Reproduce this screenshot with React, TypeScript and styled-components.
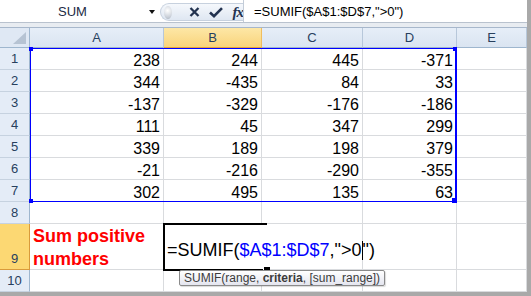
import React from "react";
import styled, { createGlobalStyle } from "styled-components";

const GlobalStyle = createGlobalStyle`
  html, body {
    margin: 0;
    padding: 0;
    background: #fff;
  }
  body {
    font-family: "Liberation Sans", Arial, sans-serif;
  }
`;

const Window = styled.div`
  width: 531px;
  height: 296px;
  box-sizing: border-box;
  overflow: hidden;
  background: #fff;
  border-right: 4px solid #a9a9a9;
  border-bottom: 4px solid #a9a9a9;
  display: flex;
  flex-direction: column;
`;

const FormulaBar = styled.div`
  height: 23px;
  box-sizing: border-box;
  border-bottom: 1px solid #b9c2ce;
  display: flex;
  align-items: stretch;
  background: #fff;
`;

const NameBox = styled.div`
  width: 160px;
  display: flex;
  align-items: center;
`;

const NameText = styled.div`
  flex: 1;
  text-align: center;
  font-size: 13px;
  color: #1b2a44;
`;

const DropArrow = styled.div`
  width: 0;
  height: 0;
  margin: 1px 5px 0 4px;
  border-left: 3.5px solid transparent;
  border-right: 3.5px solid transparent;
  border-top: 4px solid #111;
`;

const ButtonPill = styled.div`
  width: 83px;
  margin: 3px 0 1px;
  box-sizing: border-box;
  border: 1px solid #c7d1de;
  border-right: none;
  border-radius: 10px 0 0 10px;
  background: linear-gradient(#f5f8fc, #dfe7f2);
  display: flex;
  align-items: center;
  padding-left: 3px;
  gap: 9px;
`;

const Bubble = styled.div`
  width: 11px;
  height: 13px;
  border-radius: 50%;
  background: radial-gradient(circle at 45% 35%, #ffffff, #c9cfd8 70%, #a9b2be);
  margin-right: 8px;
`;

const BarIcon = styled.svg`
  display: block;
  flex: none;
`;

const Fx = styled.span`
  font-family: "Liberation Serif", "Times New Roman", serif;
  font-style: italic;
  font-weight: bold;
  font-size: 15px;
  color: #22324f;
  letter-spacing: -1px;
  margin-left: 1px;
`;

const FormulaInput = styled.div`
  flex: 1;
  border-left: 1px solid #c3ccd8;
  display: flex;
  align-items: center;
  padding-left: 10px;
  font-size: 13px;
  color: #000;
  white-space: nowrap;
`;

const Band = styled.div`
  height: 5px;
  box-sizing: border-box;
  background: #e8ecf1;
  border-bottom: 1px solid #a7b7cb;
`;

const Sheet = styled.div`
  display: grid;
  grid-template-columns: 30px 134px 98px 101px 94px 70px;
  grid-template-rows: 20px repeat(8, 22px) 46px 22px;
`;

type Placed = { $row: number; $col: number };

const Corner = styled.div<Placed>`
  grid-row: ${(p) => p.$row};
  grid-column: ${(p) => p.$col};
  position: relative;
  box-sizing: border-box;
  background: #dfe8f4;
  border-right: 1px solid #9eb6ce;
  border-bottom: 1px solid #9eb6ce;
  &::after {
    content: "";
    position: absolute;
    right: 3px;
    bottom: 3px;
    width: 13px;
    height: 12px;
    background: #b6c3d3;
    clip-path: polygon(100% 0, 100% 100%, 0 100%);
  }
`;

const ColHead = styled.div<Placed & { $active?: boolean }>`
  grid-row: ${(p) => p.$row};
  grid-column: ${(p) => p.$col};
  box-sizing: border-box;
  display: flex;
  align-items: center;
  justify-content: center;
  font-size: 13px;
  color: #27405e;
  background: ${(p) =>
    p.$active ? "linear-gradient(#fde7a6, #f9d47c)" : "linear-gradient(#e6eef8, #dae4f1)"};
  border-right: 1px solid ${(p) => (p.$active ? "#f0bd5e" : "#b7c7da")};
  border-bottom: 1px solid ${(p) => (p.$active ? "#e2a53c" : "#9eb6ce")};
`;

const RowHead = styled.div<Placed & { $active?: boolean }>`
  grid-row: ${(p) => p.$row};
  grid-column: ${(p) => p.$col};
  box-sizing: border-box;
  display: flex;
  align-items: ${(p) => (p.$active ? "flex-end" : "center")};
  justify-content: center;
  padding-bottom: ${(p) => (p.$active ? "3px" : "0")};
  font-size: 13px;
  color: #27405e;
  background: ${(p) => (p.$active ? "#fcd873" : "#e4ecf7")};
  border-right: 1px solid ${(p) => (p.$active ? "#d99a3b" : "#9eb6ce")};
  border-bottom: 1px solid ${(p) => (p.$active ? "#d99a3b" : "#c6d2e0")};
`;

const Cell = styled.div<Placed & { $align?: "left" | "right" }>`
  grid-row: ${(p) => p.$row};
  grid-column: ${(p) => p.$col};
  box-sizing: border-box;
  border-right: 1px solid #d9dbde;
  border-bottom: 1px solid #d9dbde;
  display: flex;
  align-items: flex-end;
  justify-content: ${(p) => (p.$align === "right" ? "flex-end" : "flex-start")};
  padding: 0 3px;
  font-size: 16px;
  line-height: 17px;
  color: #000;
  white-space: nowrap;
`;

const Label = styled.div`
  font-weight: bold;
  font-size: 18px;
  line-height: 23px;
  color: #ff0000;
  margin-bottom: -2px;
  white-space: normal;
`;

const RefRange = styled.div`
  grid-row: 2 / 9;
  grid-column: 2 / 6;
  position: relative;
  box-sizing: border-box;
  border: 1px solid #0000ff;
  border-right-width: 2px;
  pointer-events: none;
  z-index: 2;
`;

const Handle = styled.div<{ $x: "left" | "right"; $y: "top" | "bottom"; $size: number }>`
  position: absolute;
  width: ${(p) => p.$size}px;
  height: ${(p) => p.$size}px;
  background: #0000ff;
  ${(p) => p.$x}: -2px;
  ${(p) => p.$y}: -2px;
`;

const EditCell = styled.div`
  grid-row: 10;
  grid-column: 3;
  margin: -1px -5px -1px -1px;
  position: relative;
  z-index: 3;
  box-sizing: border-box;
  border: 2px solid #000;
  border-right: none;
  display: flex;
  align-items: center;
  padding: 6px 0 0 2px;
  font-size: 18px;
  white-space: nowrap;
  color: #000;
`;

const RefText = styled.span`
  color: #0000ff;
`;

const Caret = styled.span`
  display: inline-block;
  width: 1px;
  height: 19px;
  background: #000;
  vertical-align: -4px;
`;

const FillHandle = styled.div`
  position: absolute;
  right: -3px;
  bottom: -4px;
  width: 6px;
  height: 5px;
  background: #000;
  border: 1px solid #fff;
  border-right: none;
`;

const Tooltip = styled.div`
  position: absolute;
  left: 14px;
  top: calc(100% + 1px);
  height: 16px;
  box-sizing: border-box;
  padding: 0 4px;
  border: 1px solid #8a8a8a;
  border-radius: 2px;
  background: linear-gradient(#ffffff, #e4e5ef);
  box-shadow: 1px 1px 1px rgba(0, 0, 0, 0.15);
  font-size: 12px;
  line-height: 14px;
  color: #3c3c3c;
`;

const data = [
  [238, 244, 445, -371],
  [344, -435, 84, 33],
  [-137, -329, -176, -186],
  [111, 45, 347, 299],
  [339, 189, 198, 379],
  [-21, -216, -290, -355],
  [302, 495, 135, 63],
];

const columns = ["A", "B", "C", "D", "E"];

const EditCellBlock = () => (
  <EditCell>
    <span>
      =SUMIF(<RefText>$A$1:$D$7</RefText>,"&gt;0
      <Caret />
      ")
    </span>
    <FillHandle />
    <Tooltip>
      SUMIF(range, <b>criteria</b>, [sum_range])
    </Tooltip>
  </EditCell>
);

const App = () => {
  const rows = Array.from({ length: 10 }, (_, i) => i + 1);

  return (
    <Window>
      <GlobalStyle />
      <FormulaBar>
        <NameBox>
          <NameText>SUM</NameText>
          <DropArrow />
        </NameBox>
        <ButtonPill>
          <Bubble />
          <BarIcon width="11" height="10" viewBox="0 0 11 10">
            <path d="M1.5 1 L9.5 9 M9.5 1 L1.5 9" stroke="#22324f" strokeWidth="2.3" fill="none" />
          </BarIcon>
          <BarIcon width="14" height="11" viewBox="0 0 14 11">
            <path d="M1 5.5 L5 9.2 L13 1.2" stroke="#22324f" strokeWidth="2.6" fill="none" />
          </BarIcon>
          <Fx>fx</Fx>
        </ButtonPill>
        <FormulaInput>=SUMIF($A$1:$D$7,"&gt;0")</FormulaInput>
      </FormulaBar>
      <Band />
      <Sheet>
        <Corner $row={1} $col={1} />
        {columns.map((c, i) => (
          <ColHead key={c} $row={1} $col={i + 2} $active={c === "B"}>
            {c}
          </ColHead>
        ))}
        {rows.map((r) => (
          <React.Fragment key={r}>
            <RowHead $row={r + 1} $col={1} $active={r === 9}>
              {r}
            </RowHead>
            {columns.map((c, ci) => {
              if (r === 9 && c === "B") return <EditCellBlock key={c} />;
              const value = data[r - 1]?.[ci];
              return (
                <Cell key={c} $row={r + 1} $col={ci + 2} $align={value !== undefined ? "right" : "left"}>
                  {value !== undefined ? value : null}
                  {r === 9 && c === "A" ? <Label>Sum positive numbers</Label> : null}
                </Cell>
              );
            })}
          </React.Fragment>
        ))}
        <RefRange>
          <Handle $x="left" $y="top" $size={4} />
          <Handle $x="right" $y="top" $size={4} />
          <Handle $x="left" $y="bottom" $size={4} />
          <Handle $x="right" $y="bottom" $size={5} />
        </RefRange>
      </Sheet>
    </Window>
  );
};

export default App;
